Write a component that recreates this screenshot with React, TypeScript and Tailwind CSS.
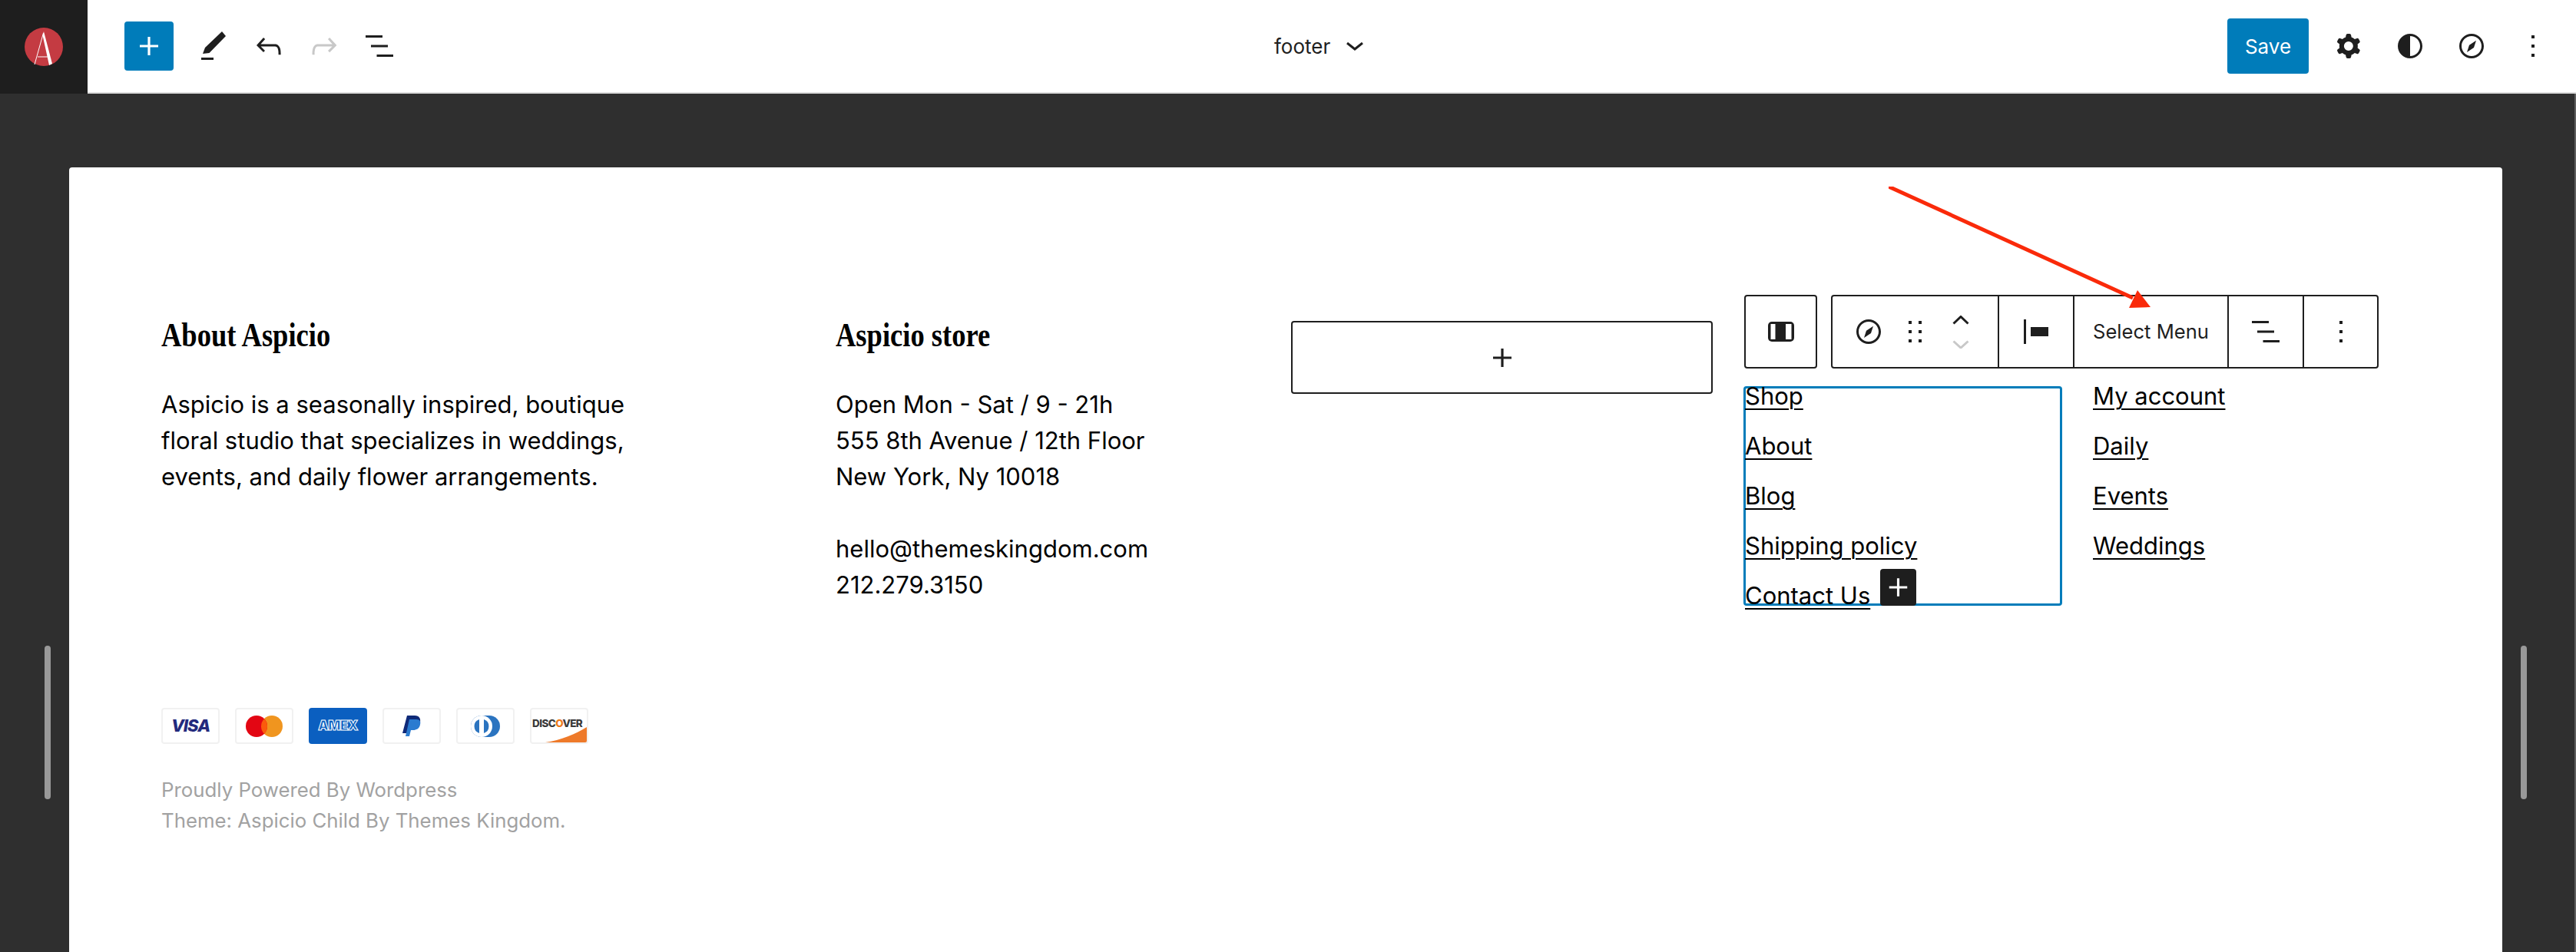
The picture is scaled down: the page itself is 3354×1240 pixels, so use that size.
import type { ReactNode } from "react"

const ink = "#1e1e1e"

const PlusIcon = ({ color = ink }: { color?: string }) => (
  <svg width="48" height="48" viewBox="0 0 24 24" fill={color}>
    <path d="M18 11.2h-5.2V6h-1.6v5.2H6v1.6h5.2V18h1.6v-5.2H18z" />
  </svg>
)

const UndoIcon = () => (
  <svg width="48" height="48" viewBox="0 0 24 24" fill={ink}>
    <path d="M18.3 11.7c-.6-.6-1.4-.9-2.3-.9H6.7l2.9-3.3-1.1-1-4.5 5L8.5 16l1-1-2.7-2.7H16c.5 0 .9.2 1.3.5 1 1 1 3.4 1 4.5v.3h1.5v-.2c0-1.5 0-4.3-1.5-5.7z" />
  </svg>
)

const RedoIcon = () => (
  <svg width="48" height="48" viewBox="0 0 24 24" fill="#c8c8c8">
    <path d="M15.6 6.5l-1.1 1 2.9 3.3H8c-.9 0-1.7.3-2.3.9-1.4 1.5-1.4 4.2-1.4 5.7v.2h1.5v-.3c0-1.1 0-3.5 1-4.5.3-.3.7-.5 1.3-.5h9.2L14.5 15l1.1 1.1 4.6-4.6-4.6-5z" />
  </svg>
)

const ListIcon = () => (
  <svg width="36" height="28" viewBox="0 0 36 28" fill={ink}>
    <rect x="0" y="0" width="22" height="3" />
    <rect x="7" y="12.5" width="22" height="3" />
    <rect x="14.5" y="25" width="21.5" height="3" />
  </svg>
)

const PenIcon = () => (
  <svg width="32" height="38" viewBox="0 0 32 38" fill={ink}>
    <path d="M27 0 32 6 10.5 28 2 29 5 21Z" />
    <rect x="0" y="34" width="16" height="3" />
  </svg>
)

const CogIcon = () => (
  <svg width="48" height="48" viewBox="0 0 24 24" fill={ink}>
    <path
      fillRule="evenodd"
      clipRule="evenodd"
      d="M10.289 4.836A1 1 0 0111.275 4h1.306a1 1 0 01.987.836l.244 1.466c.787.26 1.503.679 2.108 1.218l1.393-.522a1 1 0 011.216.437l.653 1.13a1 1 0 01-.23 1.273l-1.148.944a6.025 6.025 0 010 2.435l1.149.946a1 1 0 01.23 1.272l-.653 1.13a1 1 0 01-1.216.437l-1.394-.522c-.605.54-1.32.958-2.108 1.218l-.244 1.466a1 1 0 01-.987.836h-1.306a1 1 0 01-.986-.836l-.244-1.466a5.995 5.995 0 01-2.108-1.218l-1.394.522a1 1 0 01-1.217-.436l-.653-1.131a1 1 0 01.23-1.272l1.149-.946a6.026 6.026 0 010-2.435l-1.148-.944a1 1 0 01-.23-1.272l.653-1.131a1 1 0 011.217-.437l1.393.522a5.994 5.994 0 012.108-1.218l.244-1.466zM14.929 12a3 3 0 11-6 0 3 3 0 016 0z"
    />
  </svg>
)

const ContrastIcon = () => (
  <svg width="48" height="48" viewBox="0 0 24 24" fill={ink}>
    <path d="M12 4c-4.4 0-8 3.6-8 8s3.6 8 8 8 8-3.6 8-8-3.6-8-8-8zm0 14.5V5.5c3.6 0 6.5 2.9 6.5 6.5s-2.9 6.5-6.5 6.5z" />
  </svg>
)

const CompassIcon = () => (
  <svg className="block" width="48" height="48" viewBox="0 0 24 24" fill={ink}>
    <path d="M12 4c-4.4 0-8 3.6-8 8s3.6 8 8 8 8-3.6 8-8-3.6-8-8-8zm0 14.5c-3.6 0-6.5-2.9-6.5-6.5S8.4 5.5 12 5.5s6.5 2.9 6.5 6.5-2.9 6.5-6.5 6.5zM9 16l4.5-3L15 8.4l-4.5 3L9 16z" />
  </svg>
)

const DotsIcon = () => (
  <svg width="4" height="28" viewBox="0 0 4 28" fill={ink}>
    <rect y="0" width="4" height="4" />
    <rect y="12" width="4" height="4" />
    <rect y="24" width="4" height="4" />
  </svg>
)

const Logo = () => (
  <svg width="50" height="50" viewBox="0 0 50 50">
    <circle cx="25" cy="25" r="25" fill="#c43b42" />
    <path d="M25 5 36 47 32 49 23.5 10Z" fill="#fff" />
    <path d="M24.5 7 13 48" stroke="#fff" strokeWidth="1" />
    <path d="M17 38H30" stroke="#fff" strokeWidth="1" />
  </svg>
)

const PayCard = ({ children, className = "bg-white border-2 border-[#f1f1f1]" }: { children: ReactNode; className?: string }) => (
  <div className={`relative flex h-[47px] w-[76px] items-center justify-center overflow-hidden rounded-[4px] ${className}`}>
    {children}
  </div>
)

const PaymentRow = () => (
  <div className="flex gap-5">
    <PayCard>
      <span className="text-[22px] font-extrabold italic tracking-[-1px] text-[#232a7d]">VISA</span>
    </PayCard>
    <PayCard>
      <svg width="50" height="30" viewBox="0 0 50 30">
        <circle cx="35" cy="15" r="14" fill="#f0951f" />
        <circle cx="15" cy="15" r="14" fill="#e30613" />
        <path d="M25 5.2a14 14 0 0 1 0 19.6a14 14 0 0 1 0-19.6Z" fill="#fb5b0c" />
      </svg>
    </PayCard>
    <PayCard className="bg-[#0b5fc0]">
      <span className="text-[17px] font-black tracking-[-0.5px] text-[#0b5fc0] [-webkit-text-stroke:1px_#ffffff]">AMEX</span>
    </PayCard>
    <PayCard>
      <svg width="24" height="28" viewBox="0 0 24 28">
        <path d="M6 0h10c6 0 8 4 7 9-1 6-5 8-10 8H9l-2 6H0Z" fill="#0f2a78" />
        <path d="M9 5h9c5 0 6 3 5 7-1 5-5 7-9 7h-3l-2 8H4Z" fill="#2a7bd0" />
      </svg>
    </PayCard>
    <PayCard>
      <svg width="38" height="28" viewBox="0 0 38 28">
        <path d="M14 0h10a14 14 0 0 1 0 28H14a14 14 0 0 1 0-28Z" fill="#2b74c0" />
        <circle cx="14" cy="14" r="14" fill="#fff" />
        <path d="M11 5v18a9.5 9.5 0 0 1 0-18Z" fill="#2b74c0" />
        <path d="M17 5v18a9.5 9.5 0 0 0 0-18Z" fill="#2b74c0" />
      </svg>
    </PayCard>
    <PayCard>
      <span className="absolute left-[1px] top-[10px] whitespace-nowrap text-[13.5px] font-extrabold leading-[16px] tracking-[-0.6px] text-[#3a3a3a]">
        DISC<span className="text-[#ee7a1a]">O</span>VER
      </span>
      <svg className="absolute bottom-0 right-0" width="54" height="20" viewBox="0 0 54 20">
        <path d="M0 20C20 17 40 9 54 0V20Z" fill="#ee7a2a" />
      </svg>
    </PayCard>
  </div>
)

const NavList = ({ items }: { items: string[] }) => (
  <ul className="-mt-[6px] flex flex-col">
    {items.map((item) => (
      <li key={item} className="h-[65px] text-[31px] leading-[32px]">
        <a className="text-black underline decoration-2 underline-offset-[5px]">{item}</a>
      </li>
    ))}
  </ul>
)

const BlockToolbar = () => (
  <div className="absolute left-[2181px] top-[166px] flex gap-[18px]">
    <div className="flex h-[96px] w-[95px] items-center justify-center rounded-[4px] border-2 border-[#1e1e1e] bg-white">
      <svg width="34" height="26" viewBox="0 0 34 26" fill={ink}>
        <rect width="34" height="26" rx="5" />
        <rect x="3.5" y="3" width="6" height="20" fill="#fff" />
        <rect x="23" y="3" width="7.5" height="20" fill="#fff" />
      </svg>
    </div>
    <div className="flex h-[96px] w-[713px] rounded-[4px] border-2 border-[#1e1e1e] bg-white">
      <div className="flex w-[217px] items-center border-r-2 border-[#1e1e1e]">
        <div className="ml-[23px]">
          <CompassIcon />
        </div>
        <svg className="ml-[28px]" width="17" height="28" viewBox="0 0 17 28" fill={ink}>
          <rect x="0" y="0" width="4" height="4" />
          <rect x="13" y="0" width="4" height="4" />
          <rect x="0" y="12" width="4" height="4" />
          <rect x="13" y="12" width="4" height="4" />
          <rect x="0" y="24" width="4" height="4" />
          <rect x="13" y="24" width="4" height="4" />
        </svg>
        <svg className="ml-[40px]" width="22" height="43" viewBox="0 0 22 43" fill="none" strokeWidth="3">
          <path d="M1.5 10.5 11 1.5 20.5 10.5" stroke={ink} />
          <path d="M1.5 33.5 11 42 20.5 33.5" stroke="#c8c8c8" />
        </svg>
      </div>
      <div className="flex w-[98px] items-center justify-center border-r-2 border-[#1e1e1e]">
        <svg width="32" height="32" viewBox="0 0 32 32" fill={ink}>
          <rect x="0" y="0" width="3" height="32" />
          <rect x="9" y="10" width="23" height="12" />
        </svg>
      </div>
      <div className="flex w-[201px] items-center justify-center border-r-2 border-[#1e1e1e] text-[25.6px] text-[#1e1e1e]">
        Select Menu
      </div>
      <div className="flex w-[98px] items-center justify-center border-r-2 border-[#1e1e1e]">
        <ListIcon />
      </div>
      <div className="flex flex-1 items-center justify-center">
        <DotsIcon />
      </div>
    </div>
  </div>
)

export default function App() {
  return (
    <div className="flex h-[1240px] w-[3354px] flex-col overflow-hidden bg-[#2f2f2f] [font-family:Inter,sans-serif]">
      <header className="flex h-[122px] items-center border-b-2 border-[#dddddd] bg-white">
        <div className="-mb-[2px] flex h-[122px] w-[114px] items-center justify-center bg-[#1e1e1e]">
          <Logo />
        </div>
        <button className="ml-[48px] flex h-[64px] w-[64px] items-center justify-center rounded-[4px] bg-[#007cba]">
          <PlusIcon color="#ffffff" />
        </button>
        <div className="ml-[36px]">
          <PenIcon />
        </div>
        <div className="ml-[32px]">
          <UndoIcon />
        </div>
        <div className="ml-[24px]">
          <RedoIcon />
        </div>
        <div className="ml-[30px]">
          <ListIcon />
        </div>
        <div className="ml-[1147px] flex items-center gap-[21px] text-[26px] text-[#1e1e1e]">
          <span>footer</span>
          <svg width="22" height="11" viewBox="0 0 22 11" fill="none" stroke={ink} strokeWidth="3">
            <path d="M1 1 11 9 21 1" />
          </svg>
        </div>
        <button className="ml-auto flex h-[72px] w-[106px] items-center justify-center rounded-[4px] bg-[#007cba] text-[26px] text-white">
          Save
        </button>
        <div className="ml-[28px]">
          <CogIcon />
        </div>
        <div className="ml-[32px]">
          <ContrastIcon />
        </div>
        <div className="ml-[32px]">
          <CompassIcon />
        </div>
        <div className="ml-[54px] mr-[54px]">
          <DotsIcon />
        </div>
      </header>

      <main className="relative flex flex-1 border-r-2 border-[#5e5e5e] pl-[90px] pt-[96px]">
        <div className="absolute left-[58px] top-[719px] h-[200px] w-[8px] rounded-full bg-[#999999]" />
        <div className="absolute left-[3282px] top-[719px] h-[200px] w-[8px] rounded-full bg-[#999999]" />

        <section className="relative w-[3168px] rounded-t-[4px] bg-white pl-[120px] pt-[200px] text-black">
          <BlockToolbar />

          <div className="flex h-[371px]">
            <div className="w-[878px]">
              <h2 className="h-[85px] origin-left scale-x-[0.83] text-[44px] font-bold leading-[38px] [font-family:'Liberation_Serif',serif]">
                About Aspicio
              </h2>
              <p className="text-[31px] leading-[47px]">
                Aspicio is a seasonally inspired, boutique
                <br />
                floral studio that specializes in weddings,
                <br />
                events, and daily flower arrangements.
              </p>
            </div>
            <div className="w-[593px]">
              <h2 className="h-[85px] origin-left scale-x-[0.83] text-[44px] font-bold leading-[38px] [font-family:'Liberation_Serif',serif]">
                Aspicio store
              </h2>
              <p className="text-[31px] leading-[47px]">
                Open Mon - Sat / 9 - 21h
                <br />
                555 8th Avenue / 12th Floor
                <br />
                New York, Ny 10018
                <br />
                <br />
                hello@themeskingdom.com
                <br />
                212.279.3150
              </p>
            </div>
            <div className="flex h-[95px] w-[549px] items-center justify-center rounded-[4px] border-2 border-[#1e1e1e]">
              <PlusIcon />
            </div>
            <div className="relative ml-[40px] mt-[85px] h-[286px] w-[415px] rounded-[4px] border-[3px] border-[#007cba]">
              <div className="-ml-[1px]">
                <NavList items={["Shop", "About", "Blog", "Shipping policy", "Contact Us"]} />
              </div>
              <div className="absolute left-[175px] top-[235px] flex h-[48px] w-[47px] items-center justify-center rounded-[4px] bg-[#1e1e1e]">
                <PlusIcon color="#ffffff" />
              </div>
            </div>
            <div className="ml-[40px] mt-[88px]">
              <NavList items={["My account", "Daily", "Events", "Weddings"]} />
            </div>
          </div>

          <div className="mt-[133px]">
            <PaymentRow />
          </div>
          <p className="mt-[40px] text-[25.8px] leading-[40px] text-[#a2a2a2]">
            Proudly Powered By Wordpress
            <br />
            Theme: Aspicio Child By Themes Kingdom.
          </p>
        </section>
      </main>

      <svg className="absolute left-[2459px] top-[243px]" width="350" height="165" viewBox="0 0 350 165" fill="#fa2a0a">
        <path d="M0 0 318 145" stroke="#fa2a0a" strokeWidth="5" />
        <path d="M324 135 341 157 313 158Z" />
      </svg>
    </div>
  )
}
